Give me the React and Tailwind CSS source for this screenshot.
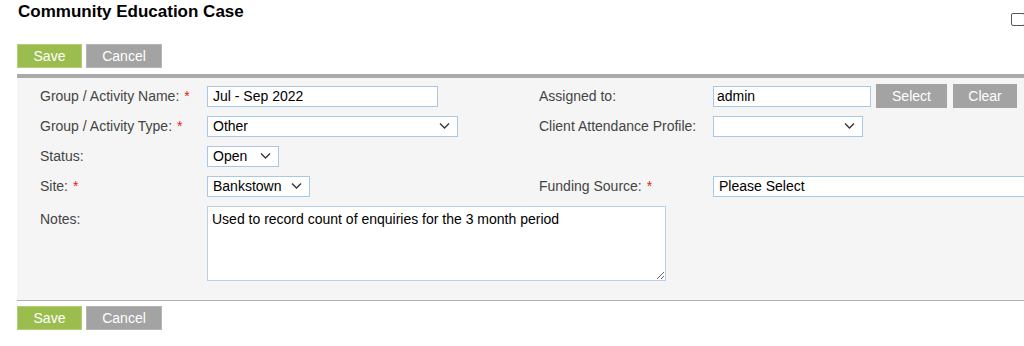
import { useState } from "react";

const font = { fontFamily: '"Liberation Sans", Arial, Helvetica, sans-serif' };

function Chevron() {
  return (
    <svg
      width="11"
      height="7"
      viewBox="0 0 11 7"
      className="pointer-events-none absolute right-[8px] top-1/2 -translate-y-1/2"
    >
      <path d="M1 1l4.5 4.5L10 1" fill="none" stroke="#333" strokeWidth="1.3" />
    </svg>
  );
}

function Dropdown({ value, options, width }) {
  const [v, setV] = useState(value);
  return (
    <div className={`relative shrink-0 ${width}`}>
      <select
        value={v}
        onChange={(e) => setV(e.target.value)}
        className="h-[21px] w-full appearance-none border border-[#a8c9e6] bg-white pl-[5px] pr-[24px] text-[14px] leading-[19px] text-black outline-none"
      >
        {options.map((o) => (
          <option key={o} value={o}>
            {o}
          </option>
        ))}
      </select>
      <Chevron />
    </div>
  );
}

function Req() {
  return <span className="ml-[5px] text-[#e02020]">*</span>;
}

function Buttons() {
  return (
    <div className="flex gap-[4px]">
      <button className="h-[24px] w-[65px] border border-[#b3cf7a] bg-[#9bbd4e] text-[14px] text-white">
        Save
      </button>
      <button className="h-[24px] w-[76px] border border-[#b5b5b5] bg-[#a3a3a3] text-[14px] text-white">
        Cancel
      </button>
    </div>
  );
}

export default function App() {
  const [name, setName] = useState("Jul - Sep 2022");
  const [assigned, setAssigned] = useState("admin");
  const [notes, setNotes] = useState(
    "Used to record count of enquiries for the 3 month period"
  );

  return (
    <div className="h-[346px] w-[1024px] overflow-hidden bg-white" style={font}>
      <div className="flex items-start justify-between">
        <h1 className="ml-[18px] mt-[2px] text-[17px] font-bold leading-[20px] text-black">
          Community Education Case
        </h1>
        <input
          type="checkbox"
          className="mr-[-1px] mt-[13px] h-[13px] w-[14px] shrink-0 appearance-none rounded-[2px] border border-[#555] bg-white"
        />
      </div>

      <div className="ml-[17px] mt-[18px]">
        <Buttons />
      </div>

      <div className="ml-[17px] mt-[6px] border-t-[4px] border-b border-[#aaaaaa] border-b-[#b0b0b0] bg-[#f5f5f5] pb-[19px] pl-[23px] pt-[3px] text-[14px] text-[#444]">
        <div className="flex h-[30px] items-center">
          <div className="w-[167px] shrink-0">
            Group / Activity Name:<Req />
          </div>
          <div className="w-[332px] shrink-0">
            <input
              value={name}
              onChange={(e) => setName(e.target.value)}
              className="h-[21px] w-[231px] border border-[#a8c9e6] bg-white px-[5px] text-[14px] text-black outline-none"
            />
          </div>
          <div className="w-[174px] shrink-0">Assigned to:</div>
          <div className="flex shrink-0 items-center">
            <input
              value={assigned}
              onChange={(e) => setAssigned(e.target.value)}
              className="h-[21px] w-[158px] border border-[#a8c9e6] bg-white px-[3px] text-[14px] text-black outline-none"
            />
            <button className="ml-[5px] h-[24px] w-[71px] bg-[#a3a3a3] text-[14px] text-white">
              Select
            </button>
            <button className="ml-[6px] h-[24px] w-[64px] bg-[#a3a3a3] text-[14px] text-white">
              Clear
            </button>
          </div>
        </div>

        <div className="flex h-[30px] items-center">
          <div className="w-[167px] shrink-0">
            Group / Activity Type:<Req />
          </div>
          <div className="w-[332px] shrink-0">
            <Dropdown value="Other" options={["Other"]} width="w-[251px]" />
          </div>
          <div className="w-[174px] shrink-0">Client Attendance Profile:</div>
          <Dropdown value="" options={[""]} width="w-[150px]" />
        </div>

        <div className="flex h-[30px] items-center">
          <div className="w-[167px] shrink-0">Status:</div>
          <Dropdown value="Open" options={["Open", "Closed"]} width="w-[72px]" />
        </div>

        <div className="flex h-[30px] items-center">
          <div className="w-[167px] shrink-0">
            Site:<Req />
          </div>
          <div className="w-[332px] shrink-0">
            <Dropdown value="Bankstown" options={["Bankstown"]} width="w-[103px]" />
          </div>
          <div className="w-[174px] shrink-0">
            Funding Source:<Req />
          </div>
          <Dropdown value="Please Select" options={["Please Select"]} width="w-[360px]" />
        </div>

        <div className="mt-[5px] flex items-start">
          <div className="w-[167px] shrink-0 pt-[3px]">Notes:</div>
          <textarea
            value={notes}
            onChange={(e) => setNotes(e.target.value)}
            className="h-[75px] w-[459px] border border-[#b9d0e6] bg-white px-[4px] py-[2px] text-[14px] text-black outline-none"
          />
        </div>
      </div>

      <div className="ml-[17px] mt-[5px]">
        <Buttons />
      </div>
    </div>
  );
}
